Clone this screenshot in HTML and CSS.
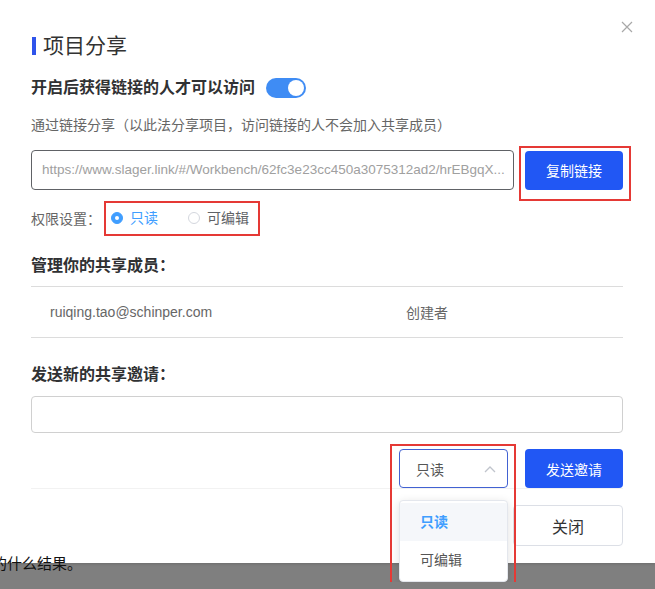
FILE: index.html
```
<!DOCTYPE html>
<html lang="zh-CN">
<head>
  <meta charset="UTF-8">
  <meta name="viewport" content="width=device-width, initial-scale=1.0">
  <title>项目分享</title>
  <link rel="stylesheet" href="styles.css">
</head>
<body>
  <div class="dialog">
    <button class="close" type="button" aria-label="关闭">
      <svg width="12" height="12" viewBox="0 0 12 12"><path d="M1 1L11 11M11 1L1 11" stroke="#a8a8a8" stroke-width="1.2" fill="none"/></svg>
    </button>

    <h2 class="title">项目分享</h2>

    <div class="switch-row">
      <span class="strong">开启后获得链接的人才可以访问</span>
      <span class="switch on"><span class="knob"></span></span>
    </div>

    <p class="hint">通过链接分享（以此法分享项目，访问链接的人不会加入共享成员）</p>

    <div class="link-row">
      <div class="link-input">https://www.slager.link/#/Workbench/62fc3e23cc450a3075312ad2/hrEBgqX...</div>
      <button class="btn primary marked copy" type="button">复制链接</button>
    </div>

    <div class="perm-row">
      <span class="label">权限设置：</span>
      <div class="radios marked">
        <label class="radio checked"><span class="dot"></span>只读</label>
        <label class="radio"><span class="dot"></span>可编辑</label>
      </div>
    </div>

    <h3 class="section">管理你的共享成员：</h3>
    <div class="members">
      <div class="member">
        <span class="email">ruiqing.tao@schinper.com</span>
        <span class="role">创建者</span>
      </div>
    </div>

    <h3 class="section invite-title">发送新的共享邀请：</h3>
    <div class="invite-input"></div>

    <div class="actions">
      <div class="select-wrap">
        <div class="select">
          <span>只读</span>
          <svg width="12" height="8" viewBox="0 0 12 8"><path d="M1 7L6 2L11 7" stroke="#c0c4cc" stroke-width="1.3" fill="none"/></svg>
        </div>
        <ul class="dropdown">
          <li class="active">只读</li>
          <li>可编辑</li>
        </ul>
        <span class="select-mark"></span>
      </div>
      <button class="btn primary send" type="button">发送邀请</button>
    </div>

    <div class="footer">
      <button class="btn plain" type="button">关闭</button>
    </div>
  </div>

  <div class="backdrop"><span class="behind">的什么结果。</span><span class="mark"></span></div>
</body>
</html>
```

FILE: styles.css
```
* {
  box-sizing: border-box;
}

body {
  margin: 0;
  font-family: "Liberation Sans", "Noto Sans CJK SC", sans-serif;
  color: #333;
  background: #7f7f7f;
  overflow: hidden;
}

.dialog {
  position: relative;
  z-index: 1;
  height: 563px;
  background: #fff;
  padding: 34px 32px 0 31px;
  box-shadow: 0 1px 3px rgba(0, 0, 0, 0.15);
}

.close {
  position: absolute;
  top: 21px;
  right: 22px;
  width: 12px;
  height: 12px;
  padding: 0;
  border: none;
  background: transparent;
  cursor: pointer;
}

.title {
  margin: 0;
  height: 24px;
  line-height: 24px;
  font-size: 21px;
  font-weight: normal;
  color: #333;
  display: flex;
  align-items: center;
}

.title::before {
  content: "";
  width: 4px;
  height: 18px;
  margin: 0 7px 0 1px;
  background: #2f54eb;
}

.switch-row {
  margin-top: 20px;
  height: 20px;
  display: flex;
  align-items: center;
}

.strong {
  font-size: 16px;
  font-weight: bold;
  line-height: 20px;
  color: #303133;
}

.switch {
  margin-left: 11px;
  width: 40px;
  height: 20px;
  border-radius: 10px;
  background: #dcdfe6;
  position: relative;
}

.switch.on {
  background: #3f8cf4;
}

.switch .knob {
  position: absolute;
  top: 2px;
  left: 2px;
  width: 16px;
  height: 16px;
  border-radius: 50%;
  background: #fff;
}

.switch.on .knob {
  left: 22px;
}

.hint {
  margin: 17px 0 0;
  line-height: 20px;
  font-size: 14px;
  color: #666;
}

.link-row {
  margin-top: 15px;
  display: flex;
  align-items: center;
}

.link-input {
  width: 483px;
  height: 40px;
  border: 1px solid #606266;
  border-radius: 4px;
  padding: 0 10px;
  line-height: 38px;
  font-size: 13.5px;
  color: #a0a0a0;
  white-space: nowrap;
  overflow: hidden;
}

.btn {
  font-family: inherit;
  font-size: 14px;
  border-radius: 4px;
  cursor: pointer;
}

.btn.primary {
  background: #2157f4;
  color: #fff;
  border: none;
  width: 98px;
  height: 39px;
}

.btn.copy {
  margin-left: 11px;
}

.btn.plain {
  background: #fff;
  color: #333;
  border: 1px solid #dcdfe6;
  width: 110px;
  height: 41px;
  font-size: 16px;
}

.marked {
  position: relative;
}

.marked::after,
.select-mark {
  content: "";
  position: absolute;
  border: 2px solid #e53935;
  pointer-events: none;
}

.copy::after {
  left: -6px;
  top: -5px;
  width: 108px;
  height: 51px;
}

.perm-row {
  margin-top: 18px;
  height: 20px;
  display: flex;
  align-items: center;
  font-size: 14px;
}

.label {
  width: 70px;
  color: #666;
}

.radios {
  margin-left: 10px;
  display: flex;
  align-items: center;
  gap: 30px;
}

.radios::after {
  left: -7px;
  top: -7px;
  width: 152px;
  height: 31px;
}

.radio {
  display: flex;
  align-items: center;
  gap: 7px;
  color: #606266;
  line-height: 20px;
}

.radio.checked {
  color: #409eff;
}

.radio .dot {
  width: 12px;
  height: 12px;
  border-radius: 50%;
  border: 1px solid #d4d7de;
  background: #fff;
  position: relative;
}

.radio.checked .dot {
  border-color: #409eff;
  background: #409eff;
}

.radio.checked .dot::after {
  content: "";
  position: absolute;
  left: 3px;
  top: 3px;
  width: 4px;
  height: 4px;
  border-radius: 50%;
  background: #fff;
}

.section {
  margin: 27px 0 0;
  line-height: 22px;
  font-size: 16px;
  font-weight: bold;
  color: #303133;
}

.members {
  margin-top: 9px;
  border-top: 1px solid #dcdcdc;
  border-bottom: 1px solid #dcdcdc;
}

.member {
  height: 50px;
  display: grid;
  grid-template-columns: 356px 1fr;
  align-items: center;
  padding-left: 19px;
  font-size: 14px;
  color: #666;
}

.invite-title {
  margin-top: 26px;
}

.invite-input {
  margin-top: 10px;
  height: 37px;
  border: 1px solid #d0d0d0;
  border-radius: 4px;
}

.actions {
  margin-top: 16px;
  display: flex;
  justify-content: flex-end;
  align-items: center;
  gap: 17px;
}

.select-wrap {
  position: relative;
  width: 109px;
  z-index: 2;
}

.select-mark {
  left: -9px;
  top: -5px;
  width: 126px;
  height: 142px;
  z-index: 3;
}

.select {
  height: 39px;
  border: 1px solid #4262d2;
  border-radius: 4px;
  padding: 0 11px 0 16px;
  display: flex;
  align-items: center;
  justify-content: space-between;
  font-size: 14px;
  color: #555;
}

.dropdown {
  position: absolute;
  top: 51px;
  left: 0;
  width: 109px;
  margin: 0;
  padding: 2px 0 2px;
  list-style: none;
  background: #fff;
  border: 1px solid #e4e7ed;
  border-radius: 4px;
  box-shadow: 0 2px 10px rgba(0, 0, 0, 0.12);
}

.dropdown li {
  height: 38px;
  line-height: 38px;
  padding-left: 20px;
  font-size: 14px;
  color: #555;
}

.dropdown li.active {
  background: #f5f7fa;
  color: #409eff;
  font-weight: bold;
}

.footer {
  border-top: 1px solid #f2f2f2;
  padding-top: 16px;
  display: flex;
  justify-content: flex-end;
}

.backdrop {
  height: 26px;
  background: #7f7f7f;
  position: relative;
}

.behind {
  display: block;
  margin: -7px 0 0 -8px;
  font-size: 15px;
  line-height: 16px;
  color: #111;
  position: relative;
  z-index: 1;
}

.mark {
  position: absolute;
  left: 433px;
  bottom: 0;
  width: 7px;
  height: 8px;
  background: #111;
}
```
